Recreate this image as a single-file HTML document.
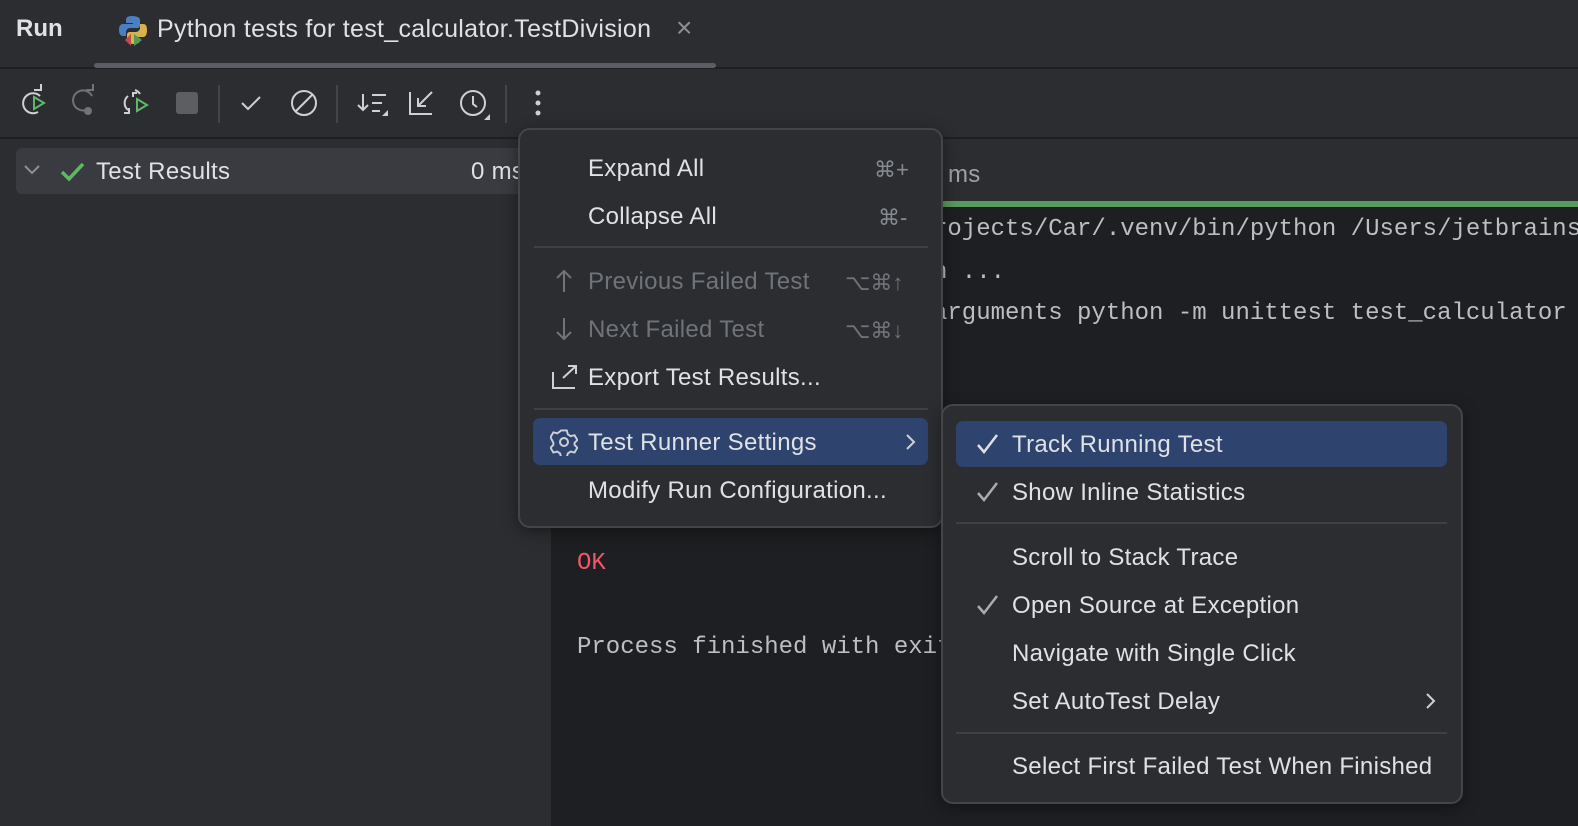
<!DOCTYPE html>
<html><head><style>
*{margin:0;padding:0;box-sizing:border-box}
body{width:1578px;height:826px;background:#2b2d30;font-family:"Liberation Sans",sans-serif;color:#dfe1e5;position:relative;overflow:hidden}
.a{position:absolute}
.t{font-size:24px;line-height:28px;white-space:nowrap;letter-spacing:0.3px}
.mono{font-family:"Liberation Mono",monospace;font-size:24px;white-space:nowrap;color:#bcbec4}
.menu{background:#2b2d30;border:2px solid #43454a;border-radius:12px;box-shadow:0 4px 16px rgba(0,0,0,.4)}
.sep{height:2px;background:#3e4044}
.sc{color:#868a91;font-size:22px}
</style></head><body>
<div class="a t" style="left:16px;top:15px;font-weight:bold;color:#dfe1e5;letter-spacing:0">Run</div>
<svg class="a" style="left:118px;top:14px" width="32" height="32" viewBox="0 0 32 32">
<path d="M14 2c-5 0-6 2-6 4v3h7v1H5c-3 0-4 3-4 6s1 6 4 6h3v-4c0-2 2-4 4-4h7c2 0 3-1 3-3V6c0-2-2-4-8-4z" fill="#4a7fc1"/>
<path d="M22 10v4c0 2-2 4-4 4h-6c-2 0-3 1-3 3v5c0 2 2 4 7 4 5 0 6-2 6-4v-2h-6v-1h9c3 0 4-3 4-7s-1-6-4-6z" fill="#d9b24a"/>
<path d="M13 20l-6 6 6 6z" fill="#c54b4b"/><path d="M16 20l8 6-8 6z" fill="#4f9d59"/></svg>
<div class="a t" style="left:157px;top:15px;color:#dfe1e5;font-size:25px;letter-spacing:0.3px">Python tests for test_calculator.TestDivision</div>
<div class="a" style="left:676px;top:12px;font-size:28px;color:#8c8f94">×</div>
<div class="a" style="left:0;top:67px;width:1578px;height:2px;background:#1e1f22"></div>
<div class="a" style="left:94px;top:63px;width:622px;height:5px;border-radius:3px;background:#5a5d63"></div>
<svg class="a" style="left:0;top:80px" width="560" height="50" viewBox="0 80 560 50" fill="none" stroke="#ced0d6" stroke-width="2">
<path d="M40 96a10 10 0 1 0-2 16"/><path d="M34 90h7v-6" /><path d="M34 97l10 6-10 6z" stroke="#5fb865"/>
<path d="M92 96a10 10 0 1 0-6 14" stroke="#6f737a"/><path d="M86 90h7v-6" stroke="#6f737a"/><circle cx="88" cy="111" r="4" fill="#6f737a" stroke="none"/>
<path d="M128 96a9 9 0 0 0 0 14"/><path d="M140 94a9 9 0 0 0-5-4"/><path d="M124 113h5v-5"/><path d="M137 93h-4v4"/><path d="M137 99l10 6-10 6z" stroke="#5fb865"/>
<rect x="176" y="92" width="22" height="22" rx="3" fill="#5c5e62" stroke="none"/>
<path d="M242 103l6 6 12-12"/>
<circle cx="304" cy="103" r="12"/><path d="M296 111l16-16"/>
<path d="M363 94v16m-5-5 5 5 5-5M372 95h14M372 103h10M372 111h8"/><path d="M388 116h-6l6-6z" fill="#ced0d6" stroke="none"/>
<path d="M410 92v22h22M432 92l-14 14m0-8v8h8"/>
<circle cx="473" cy="103" r="12"/><path d="M473 96v8l4 3"/><path d="M490 120h-6l6-6z" fill="#ced0d6" stroke="none"/>
<circle cx="538" cy="93" r="1.5" fill="#ced0d6"/><circle cx="538" cy="103" r="1.5" fill="#ced0d6"/><circle cx="538" cy="113" r="1.5" fill="#ced0d6"/>
<path d="M219 85v38M337 85v38M506 85v38" stroke="#43454a"/>
</svg>
<div class="a" style="left:0;top:137px;width:1578px;height:2px;background:#1e1f22"></div>
<div class="a" style="left:16px;top:148px;width:535px;height:46px;background:#393b40;border-radius:6px"></div>
<svg class="a" style="left:22px;top:162px" width="20" height="16" fill="none" stroke="#8c8f94" stroke-width="2"><path d="M3 4l7 7 7-7"/></svg>
<svg class="a" style="left:58px;top:160px" width="28" height="24" fill="none" stroke="#5fb865" stroke-width="3.5"><path d="M4 12l7 7L25 4"/></svg>
<div class="a t" style="left:96px;top:158px">Test Results</div>
<div class="a t" style="left:471px;top:158px">0 ms</div>
<div class="a" style="left:551px;top:139px;width:1027px;height:687px;background:#1e1f22"></div>
<div class="a" style="left:551px;top:139px;width:1027px;height:63px;background:#2b2d30"></div>
<div class="a t" style="left:948px;top:161px;color:#9da0a8">ms</div>
<div class="a" style="left:551px;top:201px;width:1027px;height:6px;background:#5a9a5d"></div>
<div class="a mono" style="left:933px;top:216px">rojects/Car/.venv/bin/python /Users/jetbrains</div>
<div class="a mono" style="left:933px;top:259px">n ...</div>
<div class="a mono" style="left:933px;top:300px">arguments python -m unittest test_calculator</div>
<div class="a mono" style="left:577px;top:550px;color:#f75464">OK</div>
<div class="a mono" style="left:577px;top:634px">Process finished with exit</div>
<div class="a menu" style="left:518px;top:128px;width:425px;height:400px"></div>
<div class="a t" style="left:588px;top:155px">Expand All</div><div class="a sc" style="left:874px;top:157px">⌘+</div>
<div class="a t" style="left:588px;top:203px">Collapse All</div><div class="a sc" style="left:878px;top:205px">⌘-</div>
<div class="a sep" style="left:534px;top:246px;width:394px"></div>
<svg class="a" style="left:554px;top:268px" width="20" height="26" fill="none" stroke="#6f737a" stroke-width="2"><path d="M10 24V3M3 10l7-7 7 7"/></svg>
<div class="a t" style="left:588px;top:268px;color:#6f737a">Previous Failed Test</div><div class="a sc" style="left:845px;top:270px;color:#6f737a">⌥⌘↑</div>
<svg class="a" style="left:554px;top:316px" width="20" height="26" fill="none" stroke="#6f737a" stroke-width="2"><path d="M10 2v21M3 16l7 7 7-7"/></svg>
<div class="a t" style="left:588px;top:316px;color:#6f737a">Next Failed Test</div><div class="a sc" style="left:845px;top:318px;color:#6f737a">⌥⌘↓</div>
<svg class="a" style="left:551px;top:364px" width="28" height="26" fill="none" stroke="#ced0d6" stroke-width="2"><path d="M2 8v16h22M12 14L25 2M17 2h8v8"/></svg>
<div class="a t" style="left:588px;top:364px">Export Test Results...</div>
<div class="a sep" style="left:534px;top:408px;width:394px"></div>
<div class="a" style="left:533px;top:418px;width:395px;height:47px;background:#2e436e;border-radius:7px"></div>
<svg class="a" style="left:550px;top:428px" width="28" height="28" viewBox="0 0 28 28" fill="none" stroke="#ced0d6" stroke-width="2"><circle cx="14" cy="14" r="4"/><path d="M11 2h6l1 4 3 2 4-1 3 5-3 3v2l3 3-3 5-4-1-3 2-1 4h-6l-1-4-3-2-4 1-3-5 3-3v-2L0 9l3-5 4 1 3-2z" transform="translate(0.5 0.5) scale(.96)"/></svg>
<div class="a t" style="left:588px;top:429px">Test Runner Settings</div>
<svg class="a" style="left:904px;top:433px" width="14" height="18" fill="none" stroke="#ced0d6" stroke-width="2"><path d="M3 2l7 7-7 7"/></svg>
<div class="a t" style="left:588px;top:477px">Modify Run Configuration...</div>
<div class="a menu" style="left:941px;top:404px;width:522px;height:400px"></div>
<div class="a" style="left:956px;top:421px;width:491px;height:46px;background:#2e436e;border-radius:7px"></div>
<svg class="a" style="left:976px;top:433px" width="24" height="22" fill="none" stroke="#dfe1e5" stroke-width="2.5"><path d="M2 12l6 7L21 2"/></svg>
<div class="a t" style="left:1012px;top:431px">Track Running Test</div>
<svg class="a" style="left:976px;top:481px" width="24" height="22" fill="none" stroke="#a8abb0" stroke-width="2.5"><path d="M2 12l6 7L21 2"/></svg>
<div class="a t" style="left:1012px;top:479px">Show Inline Statistics</div>
<div class="a sep" style="left:956px;top:522px;width:491px"></div>
<div class="a t" style="left:1012px;top:544px">Scroll to Stack Trace</div>
<svg class="a" style="left:976px;top:594px" width="24" height="22" fill="none" stroke="#a8abb0" stroke-width="2.5"><path d="M2 12l6 7L21 2"/></svg>
<div class="a t" style="left:1012px;top:592px">Open Source at Exception</div>
<div class="a t" style="left:1012px;top:640px">Navigate with Single Click</div>
<div class="a t" style="left:1012px;top:688px">Set AutoTest Delay</div>
<svg class="a" style="left:1424px;top:692px" width="14" height="18" fill="none" stroke="#ced0d6" stroke-width="2"><path d="M3 2l7 7-7 7"/></svg>
<div class="a sep" style="left:956px;top:732px;width:491px"></div>
<div class="a t" style="left:1012px;top:753px">Select First Failed Test When Finished</div>
</body></html>
